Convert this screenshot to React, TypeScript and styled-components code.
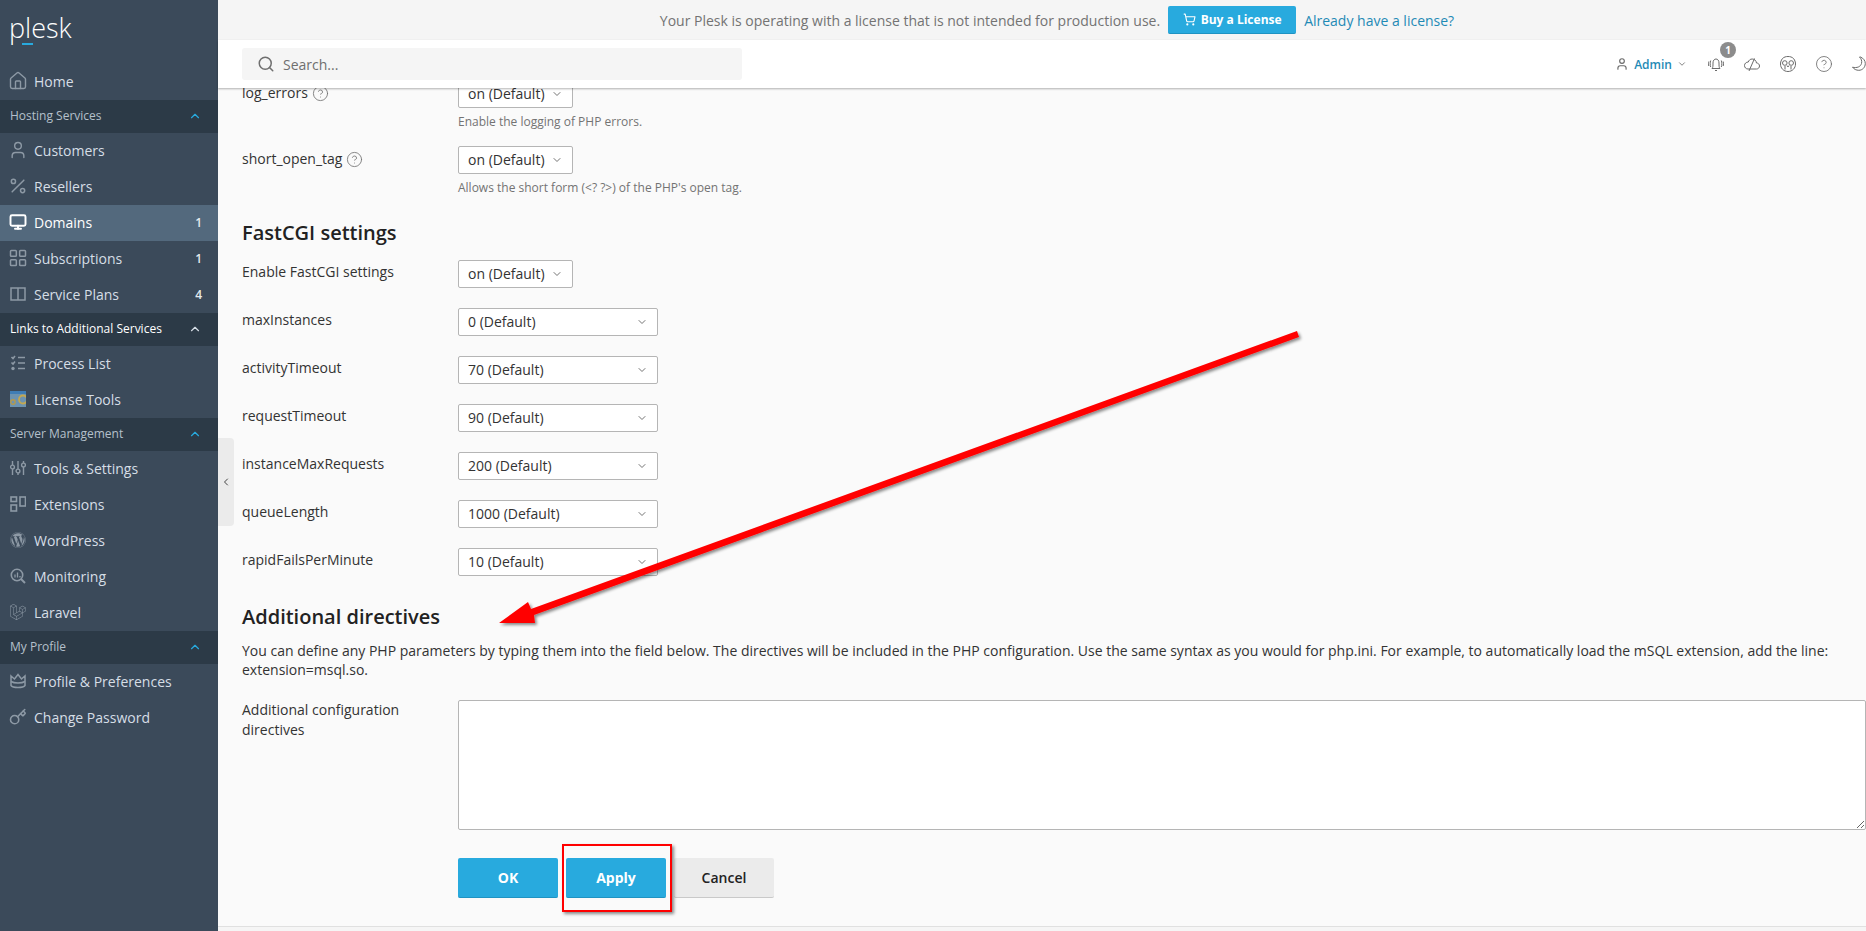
import React from 'react';
import styled, { createGlobalStyle } from 'styled-components';
import {
  ChevronDown,
  ChevronLeft,
  ChevronUp,
  CircleHelp,
  House,
  Key,
  LayoutGrid,
  Monitor,
  Percent,
  Search,
  ShoppingCart,
  User,
} from 'lucide-react';
import { FaLaravel, FaWordpress } from 'react-icons/fa';

const GlobalStyle = createGlobalStyle`
  html, body {
    margin: 0;
    height: 100%;
    overflow: hidden;
  }
  body {
    font-family: 'Open Sans', 'Liberation Sans', sans-serif;
    font-size: 14px;
    color: #222;
    background: #fafafa;
  }
  * {
    box-sizing: border-box;
  }
`;

const Page = styled.div`
  display: grid;
  grid-template-columns: 218px 1fr;
  height: 931px;
  overflow: hidden;
  position: relative;
`;

const Sidebar = styled.nav`
  background: #3b4a5a;
  color: #d6dee6;
  display: flex;
  flex-direction: column;
`;

const LogoBox = styled.div`
  height: 64px;
  padding: 8px 0 0 9px;
`;

const Logo = styled.span`
  position: relative;
  display: inline-block;
  font-size: 27px;
  font-weight: 300;
  line-height: 40px;
  color: #fff;

  &::after {
    content: '';
    position: absolute;
    left: 13px;
    top: 35px;
    width: 11px;
    height: 2px;
    background: #28aade;
  }
`;

const NavItem = styled.a<{ $active?: boolean }>`
  display: flex;
  align-items: center;
  height: 36px;
  padding: 0 16px 2px 10px;
  font-size: 14px;
  color: ${(p) => (p.$active ? '#fff' : '#d6dee6')};
  background: ${(p) => (p.$active ? '#53697d' : 'transparent')};

  svg {
    flex: none;
    color: ${(p) => (p.$active ? '#fff' : '#8d99a5')};
  }
`;

const NavIcon = styled.span`
  display: flex;
  align-items: center;
  justify-content: center;
  width: 16px;
  height: 16px;
  margin-right: 8px;
`;

const NavLabel = styled.span`
  flex: 1;
`;

const NavCount = styled.span`
  font-size: 12px;
  font-weight: 600;
  color: #e4e9ee;
`;

const Section = styled.div<{ $current?: boolean }>`
  display: flex;
  align-items: center;
  justify-content: space-between;
  height: 33px;
  padding: 0 16px 2px 10px;
  font-size: 12px;
  background: #2c3a47;
  color: ${(p) => (p.$current ? '#fff' : '#b5c0cb')};

  svg {
    color: ${(p) => (p.$current ? '#d6dee6' : '#28aade')};
  }
`;

const Main = styled.div`
  display: flex;
  flex-direction: column;
  min-width: 0;
  height: 931px;
`;

const Banner = styled.div`
  display: flex;
  align-items: center;
  justify-content: center;
  height: 40px;
  padding-left: 30px;
  background: #f5f5f5;
  color: #737373;
  font-size: 14px;
`;

const BuyButton = styled.a`
  display: flex;
  align-items: center;
  gap: 5px;
  justify-content: center;
  width: 128px;
  height: 28px;
  margin: 0 8px;
  border-radius: 2px;
  background: #28aade;
  border-bottom: 1px solid #1f93c2;
  color: #fff;
  font-size: 12px;
  font-weight: 700;
`;

const TextLink = styled.a`
  color: #1f8ab5;
`;

const Header = styled.header`
  display: flex;
  align-items: center;
  height: 48px;
  flex: none;
  padding: 0 0 0 24px;
  background: #fff;
  box-shadow: 0 1px 2px rgba(0, 0, 0, 0.3);
  position: relative;
  z-index: 2;
`;

const SearchBox = styled.div`
  display: flex;
  align-items: center;
  gap: 8px;
  width: 500px;
  height: 32px;
  padding: 0 15px;
  border-radius: 3px;
  background: #f5f5f5;
  color: #6f6f6f;
  font-size: 14px;
`;

const HeaderTools = styled.div`
  display: flex;
  align-items: center;
  margin-left: auto;
  color: #6b6b6b;
`;

const AdminMenu = styled.div`
  display: flex;
  align-items: center;
  gap: 5px;
  margin-right: 21px;
  font-size: 12px;
  font-weight: 600;
  color: #1f8ab5;

  svg {
    color: #6b6b6b;
  }
`;

const ToolIcon = styled.span`
  position: relative;
  display: flex;
  align-items: center;
  justify-content: center;
  width: 16px;
  height: 16px;
  margin-right: 20px;

  svg {
    flex: none;
  }
`;

const Badge = styled.span`
  position: absolute;
  left: 12px;
  top: -14px;
  width: 16px;
  height: 16px;
  border-radius: 50%;
  background: #8c8c8c;
  color: #fff;
  font-size: 10px;
  font-weight: 700;
  line-height: 16px;
  text-align: center;
`;

const MoonSlot = styled.span`
  display: flex;
  width: 14px;
  overflow: hidden;
`;

const Content = styled.main`
  flex: 1;
  min-height: 0;
  overflow: hidden;
`;

const Form = styled.div`
  display: flex;
  flex-direction: column;
  margin-top: -8px;
  padding-left: 24px;
`;

const Row = styled.div<{ $after?: number }>`
  display: flex;
  align-items: flex-start;
  flex: none;
  margin-bottom: ${(p) => p.$after ?? 20}px;
`;

const Label = styled.label<{ $top?: number }>`
  width: 216px;
  flex: none;
  padding-top: ${(p) => p.$top ?? 2}px;
  line-height: 20px;
  color: #333;
`;

const Help = styled.span`
  display: inline-flex;
  vertical-align: -4px;
  margin-left: 4px;
  color: #737373;
`;

const FieldStack = styled.div`
  display: flex;
  flex-direction: column;
  align-items: flex-start;
`;

const SelectBox = styled.div<{ $wide?: boolean }>`
  display: flex;
  align-items: center;
  justify-content: space-between;
  width: ${(p) => (p.$wide ? '200px' : '115px')};
  height: 28px;
  padding: 0 9px 1px;
  background: #fff;
  border: 1px solid #b5b5b5;
  border-radius: 2px;
  color: #333;

  svg {
    color: #737373;
  }
`;

const Hint = styled.div`
  margin-top: 4px;
  margin-bottom: -1px;
  font-size: 12px;
  line-height: 20px;
  color: #737373;
`;

const Heading = styled.h3<{ $after?: number }>`
  margin: 7px 0 ${(p) => p.$after ?? 0}px;
  flex: none;
  font-size: 20px;
  font-weight: 600;
  line-height: 28px;
  color: #222;
`;

const Intro = styled.p`
  margin: 10px 20px 21px 0;
  line-height: 19px;
  color: #333;
`;

const TextArea = styled.textarea`
  display: block;
  flex: 1;
  height: 130px;
  min-width: 0;
  background: #fff;
  border: 1px solid #b5b5b5;
  border-radius: 2px;
`;

const Actions = styled.div`
  display: flex;
  gap: 8px;
  margin: 28px 0 0 216px;
`;

const ActionButton = styled.button<{ $primary?: boolean }>`
  width: 100px;
  height: 40px;
  padding: 0;
  border: 0;
  border-bottom: 1px solid ${(p) => (p.$primary ? '#1f93c2' : '#c9c9c9')};
  border-radius: 2px;
  background: ${(p) => (p.$primary ? '#28aade' : '#ebebeb')};
  color: ${(p) => (p.$primary ? '#fff' : '#222')};
  font-family: inherit;
  font-size: 14px;
  font-weight: ${(p) => (p.$primary ? 700 : 600)};
`;

const Footer = styled.div`
  height: 5px;
  flex: none;
  background: #f5f5f5;
  border-top: 1px solid #e0e0e0;
`;

const CollapseHandle = styled.div`
  position: absolute;
  left: 218px;
  top: 438px;
  display: flex;
  align-items: center;
  justify-content: center;
  width: 16px;
  height: 88px;
  background: #ebebeb;
  border-radius: 0 4px 4px 0;
  color: #444;
`;

const ApplyMark = styled.div`
  position: absolute;
  left: 562px;
  top: 844px;
  width: 110px;
  height: 68px;
  border: 2px solid #f00;
  box-shadow: 2px 2px 3px rgba(0, 0, 0, 0.45);
  pointer-events: none;
`;

const ArrowDrawing = styled.svg`
  position: absolute;
  left: 0;
  top: 0;
  pointer-events: none;
`;

const LicenseIcon = () => (
  <svg width="16" height="16" viewBox="0 0 16 16">
    <rect width="16" height="16" fill="#6d93b0" />
    <rect width="16" height="3" fill="#3f7db5" />
    <circle cx="3" cy="11" r="2.2" fill="none" stroke="#b59a4c" strokeWidth="1.4" />
    <circle cx="13" cy="8.500" r="4" fill="none" stroke="#c4a84f" strokeWidth="1.8" />
  </svg>
);

const BookIcon = () => (
  <svg width="16" height="16" viewBox="0 0 16 16" fill="none" stroke="currentColor" strokeWidth="1.5">
    <path d="M1 2h14v12H1zM8 2v12" />
  </svg>
);

const ProcessIcon = () => (
  <svg width="16" height="16" viewBox="0 0 16 16" fill="none" stroke="currentColor" strokeWidth="1.6">
    <path d="M1.500 2l1.500 1.500L5 1M1.500 7.500L3 9l2-2.500M8 2.500h7M8 8h7M8 13.500h7" />
    <circle cx="3" cy="13.500" r="1.700" fill="currentColor" stroke="none" />
  </svg>
);

const SlidersIcon = () => (
  <svg width="16" height="16" viewBox="0 0 16 16" fill="none" stroke="currentColor" strokeWidth="1.400">
    <path d="M2.500 1v4M2.500 9v6M8 1v8M8 13v2M13.500 1v2M13.500 7v8" />
    <circle cx="2.500" cy="7" r="1.900" />
    <circle cx="8" cy="11" r="1.900" />
    <circle cx="13.500" cy="5" r="1.900" />
  </svg>
);

const ExtensionsIcon = () => (
  <svg width="16" height="16" viewBox="0 0 16 16" fill="none" stroke="currentColor" strokeWidth="1.6">
    <rect x="1" y="1" width="5.500" height="4.500" />
    <rect x="1" y="9" width="5.500" height="6" />
    <rect x="10" y="1" width="5.500" height="9" />
  </svg>
);

const MonitoringIcon = () => (
  <svg width="16" height="16" viewBox="0 0 16 16" fill="none" stroke="currentColor" strokeWidth="1.600">
    <circle cx="7" cy="7" r="5.700" />
    <path d="M11 11l4 4" strokeWidth="2" />
    <path d="M5 6.500v3M7.500 4.500v5M10 8v1.500" strokeWidth="1.300" />
  </svg>
);

const CrownIcon = () => (
  <svg width="16" height="16" viewBox="0 0 16 16" fill="none" stroke="currentColor" strokeWidth="1.500">
    <path d="M1 3l3.500 3L8 1.500 11.500 6 15 3v9.500c-1 1.500-4 2-7 2s-6-.5-7-2z" />
    <path d="M1 8.500c2 1.200 4.500 1.500 7 1.500s5-.3 7-1.500" />
  </svg>
);

const BellWavesIcon = () => (
  <svg width="16" height="16" viewBox="0 0 16 16" fill="none" stroke="currentColor" strokeWidth="1">
    <path d="M4 12.500c1-1 1-2.500 1-5.500 0-2.500 1.300-4 3-4s3 1.500 3 4c0 3 0 4.500 1 5.500zM7 14.500h2" />
    <path d="M2.700 4.500c-.7 2-.7 4.500 0 6.500M13.300 4.500c.7 2 .7 4.500 0 6.500M.8 5.500c-.5 1.500-.5 3 0 4.500M15.200 5.500c.5 1.500.5 3 0 4.500" />
  </svg>
);

const CloudSlashIcon = () => (
  <svg width="16" height="16" viewBox="0 0 16 16" fill="none" stroke="currentColor" strokeWidth="1">
    <path d="M4 13h8.500c1.700 0 3-1.300 3-3s-1.300-3-3-3c-.3-2.500-2.200-4-4.300-4C6.200 3 4.800 4.300 4.300 6 2.200 6 .5 7.500.5 9.500S2 13 4 13z" />
    <path d="M10.500 2.500L5 15" />
  </svg>
);

const OwlIcon = () => (
  <svg width="16" height="16" viewBox="0 0 16 16" fill="none" stroke="currentColor" strokeWidth="1">
    <path d="M2.500 2.500C4 1 6 .5 8 .5s4 .5 5.500 2l1 1.500c.8 1.500 1 2.500 1 4 0 4-3 7.500-7.500 7.500S.5 12 .5 8c0-1.500.2-2.500 1-4z" />
    <circle cx="4.800" cy="7" r="2.300" />
    <circle cx="11.200" cy="7" r="2.300" />
    <path d="M7 9.500l1 1.500 1-1.500M5 13.500V10M11 13.500V10" />
  </svg>
);

const MoonIcon = () => (
  <svg width="14" height="16" viewBox="0 0 14 16" fill="none" stroke="currentColor" strokeWidth="1">
    <path d="M8.500 1c3 1.300 4.800 3.700 4.800 6.500 0 4-3 6.800-6.500 6.800-2.500 0-4.800-1.100-6.300-3.100 4.500 1.100 8-.4 9-3.700.7-2.500-.3-4.800-2-6.500z" />
  </svg>
);

type Item = { label: string; icon: React.ReactNode; count?: number; active?: boolean };

const nav: { title?: string; current?: boolean; items: Item[] }[] = [
  { items: [{ label: 'Home', icon: <House size={20} strokeWidth={1.7} /> }] },
  {
    title: 'Hosting Services',
    items: [
      { label: 'Customers', icon: <User size={20} strokeWidth={1.7} /> },
      { label: 'Resellers', icon: <Percent size={20} strokeWidth={1.8} /> },
      { label: 'Domains', icon: <Monitor size={18} strokeWidth={2.6} />, count: 1, active: true },
      { label: 'Subscriptions', icon: <LayoutGrid size={20} strokeWidth={1.8} />, count: 1 },
      { label: 'Service Plans', icon: <BookIcon />, count: 4 },
    ],
  },
  {
    title: 'Links to Additional Services',
    current: true,
    items: [
      { label: 'Process List', icon: <ProcessIcon /> },
      { label: 'License Tools', icon: <LicenseIcon /> },
    ],
  },
  {
    title: 'Server Management',
    items: [
      { label: 'Tools & Settings', icon: <SlidersIcon /> },
      { label: 'Extensions', icon: <ExtensionsIcon /> },
      { label: 'WordPress', icon: <FaWordpress size={16} /> },
      { label: 'Monitoring', icon: <MonitoringIcon /> },
      { label: 'Laravel', icon: <FaLaravel size={16} /> },
    ],
  },
  {
    title: 'My Profile',
    items: [
      { label: 'Profile & Preferences', icon: <CrownIcon /> },
      { label: 'Change Password', icon: <Key size={18} strokeWidth={2.1} /> },
    ],
  },
];

const fastCgi = [
  ['maxInstances', '0 (Default)'],
  ['activityTimeout', '70 (Default)'],
  ['requestTimeout', '90 (Default)'],
  ['instanceMaxRequests', '200 (Default)'],
  ['queueLength', '1000 (Default)'],
  ['rapidFailsPerMinute', '10 (Default)'],
];

const SelectValue = ({ value, wide }: { value: string; wide?: boolean }) => (
  <SelectBox $wide={wide}>
    {value}
    <ChevronDown size={12} />
  </SelectBox>
);

const App = () => {
  return (
    <Page>
      <GlobalStyle />
      <Sidebar>
        <LogoBox>
          <Logo>plesk</Logo>
        </LogoBox>
        {nav.map((group, i) => (
          <React.Fragment key={i}>
            {group.title && (
              <Section $current={group.current}>
                {group.title}
                <ChevronUp size={14} />
              </Section>
            )}
            {group.items.map((item) => (
              <NavItem key={item.label} $active={item.active}>
                <NavIcon>{item.icon}</NavIcon>
                <NavLabel>{item.label}</NavLabel>
                {item.count && <NavCount>{item.count}</NavCount>}
              </NavItem>
            ))}
          </React.Fragment>
        ))}
      </Sidebar>
      <Main>
        <Banner>
          Your Plesk is operating with a license that is not intended for production use.
          <BuyButton>
            <ShoppingCart size={13} />
            Buy a License
          </BuyButton>
          <TextLink>Already have a license?</TextLink>
        </Banner>
        <Header>
          <SearchBox>
            <Search size={18} />
            Search...
          </SearchBox>
          <HeaderTools>
            <AdminMenu>
              <User size={14} />
              Admin
              <ChevronDown size={10} />
            </AdminMenu>
            <ToolIcon>
              <BellWavesIcon />
              <Badge>1</Badge>
            </ToolIcon>
            <ToolIcon>
              <CloudSlashIcon />
            </ToolIcon>
            <ToolIcon>
              <OwlIcon />
            </ToolIcon>
            <ToolIcon>
              <CircleHelp size={18} strokeWidth={1.1} />
            </ToolIcon>
            <MoonSlot>
              <MoonIcon />
            </MoonSlot>
          </HeaderTools>
        </Header>
        <Content>
          <Form>
            <Row $after={15}>
              <Label $top={3}>
                log_errors
                <Help>
                  <CircleHelp size={17} strokeWidth={1.2} />
                </Help>
              </Label>
              <FieldStack>
                <SelectValue value="on (Default)" />
                <Hint>Enable the logging of PHP errors.</Hint>
              </FieldStack>
            </Row>
            <Row $after={15}>
              <Label $top={3}>
                short_open_tag
                <Help>
                  <CircleHelp size={17} strokeWidth={1.2} />
                </Help>
              </Label>
              <FieldStack>
                <SelectValue value="on (Default)" />
                <Hint>Allows the short form (&lt;? ?&gt;) of the PHP's open tag.</Hint>
              </FieldStack>
            </Row>
            <Heading $after={13}>FastCGI settings</Heading>
            <Row>
              <Label>Enable FastCGI settings</Label>
              <SelectValue value="on (Default)" />
            </Row>
            {fastCgi.map(([name, value]) => (
              <Row key={name}>
                <Label>{name}</Label>
                <SelectValue value={value} wide />
              </Row>
            ))}
            <Heading>Additional directives</Heading>
            <Intro>
              You can define any PHP parameters by typing them into the field below. The directives will be included in
              the PHP configuration. Use the same syntax as you would for php.ini. For example, to automatically load the
              mSQL extension, add the line: extension=msql.so.
            </Intro>
            <Row $after={0}>
              <Label $top={0}>
                Additional configuration
                <br />
                directives
              </Label>
              <TextArea />
            </Row>
            <Actions>
              <ActionButton $primary>OK</ActionButton>
              <ActionButton $primary>Apply</ActionButton>
              <ActionButton>Cancel</ActionButton>
            </Actions>
          </Form>
        </Content>
        <Footer />
      </Main>
      <CollapseHandle>
        <ChevronLeft size={12} />
      </CollapseHandle>
      <ApplyMark />
      <ArrowDrawing width="1866" height="931" viewBox="0 0 1866 931">
        <defs>
          <filter id="arrow-shadow" x="-5%" y="-5%" width="110%" height="110%">
            <feDropShadow dx="2" dy="2" stdDeviation="1.5" floodColor="#000" floodOpacity="0.45" />
          </filter>
        </defs>
        <path d="M1297 331L1299 337L534 615L535 623L499 623L528 602L531 609Z" fill="#f00" filter="url(#arrow-shadow)" />
      </ArrowDrawing>
    </Page>
  );
};

export default App;
